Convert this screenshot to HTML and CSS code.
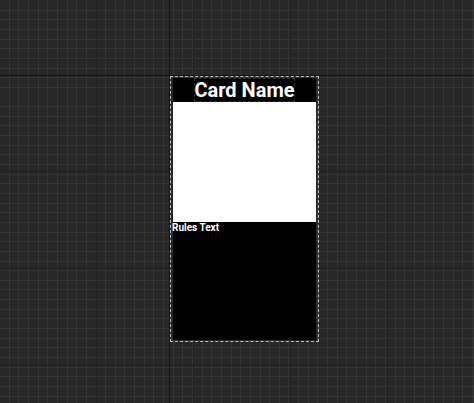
FILE: index.html
```html
<!DOCTYPE html>
<html>
<head>
<meta charset="utf-8">
<link rel="stylesheet" href="styles.css">
</head>
<body>
<div class="canvas">
  <div class="card">
    <div class="title-bar"><span class="title">Card Name</span></div>
    <div class="art"></div>
    <div class="rules"><span class="rules-text">Rules Text</span></div>
  </div>
</div>
</body>
</html>
```
FILE: styles.css
```css
html, body {
  margin: 0;
  padding: 0;
}
body {
  width: 474px;
  height: 403px;
  overflow: hidden;
  background-color: #272727;
}
.canvas {
  width: 474px;
  height: 403px;
  box-sizing: border-box;
  padding: 76px 0 0 170px;
  background-color: #272727;
  background-image:
    linear-gradient(to bottom, transparent 75px, #141414 75px, #141414 76px, transparent 76px),
    linear-gradient(to right, transparent 169px, #171717 169px, #171717 170px, transparent 170px),
    repeating-linear-gradient(to bottom, transparent 0, transparent 96px, #202020 96px, #202020 97px),
    repeating-linear-gradient(to right, transparent 0, transparent 96px, #222 96px, #222 97px),
    repeating-linear-gradient(to bottom, transparent 0, transparent 8.65px, #343434 8.65px, #343434 9.65px),
    repeating-linear-gradient(to right, transparent 0, transparent 8.65px, #343434 8.65px, #343434 9.65px);
  background-position: 0 0, 0 0, 0 75px, 0 0, 0 1px, 0 0;
  font-family: Roboto, "Liberation Sans", sans-serif;
}
.card {
  width: 149px;
  height: 266px;
  box-sizing: border-box;
  padding: 1px 2px 1px 2px;
  border: 1px dashed #bdbdbd;
  display: flex;
  flex-direction: column;
}
.title-bar {
  height: 24px;
  background: #000;
  display: flex;
  align-items: center;
  justify-content: center;
}
.title {
  color: #fff;
  font-weight: 700;
  font-size: 20px;
  line-height: 24px;
  outline: 1px dashed #2e2e2e;
  outline-offset: -1px;
}
.art {
  height: 120px;
  background: #fff;
}
.rules {
  flex: 1;
  background: #000;
}
.rules-text {
  display: block;
  color: #fff;
  font-weight: 700;
  font-size: 10px;
  line-height: 12px;
  margin-left: -1px;
}
```
